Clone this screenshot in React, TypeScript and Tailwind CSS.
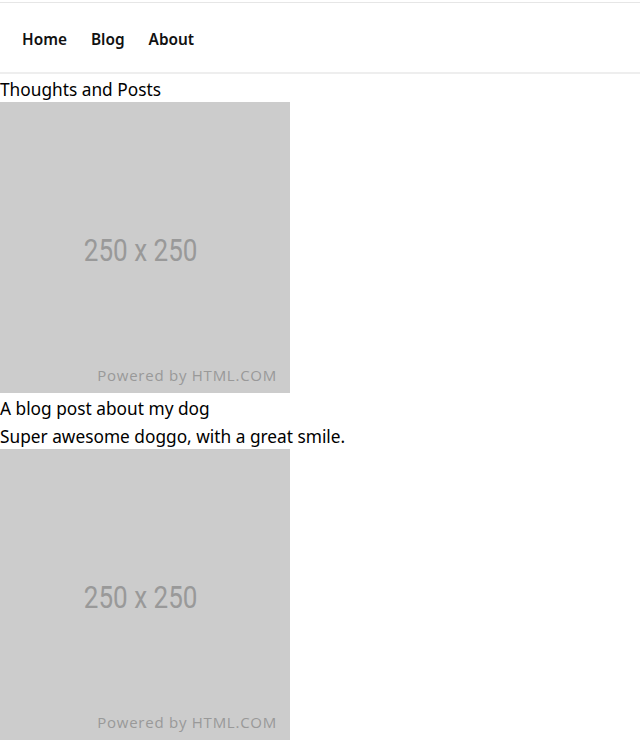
const links = ["Home", "Blog", "About"];

function Placeholder() {
  return (
    <div className="flex h-[291px] w-[290px] flex-col items-center bg-[#cccccc] text-[#999999]">
      <div className="mt-[130px] -translate-x-[4px] scale-x-[0.84] font-['Roboto',sans-serif] text-[31px] leading-[38px]">
        250 x 250
      </div>
      <div className="mt-auto mb-[8px] self-end pr-[13px] font-['Open_Sans',sans-serif] text-[15px] leading-[20px] tracking-[0.75px]">
        Powered by HTML.COM
      </div>
    </div>
  );
}

export default function App() {
  return (
    <div className="min-h-screen bg-white font-['Noto_Sans',sans-serif] text-[17.3px] text-black">
      <nav className="mt-[2px] flex h-[72px] items-center gap-[24px] border-t border-b-2 border-t-[#e6e6e6] border-b-[#eeeeee] px-[22px] pt-[4px]">
        {links.map((link) => (
          <a key={link} href="#" className="text-[15.4px] font-semibold text-[#111111]">
            {link}
          </a>
        ))}
      </nav>
      <h1 className="pt-[3px] leading-[25px]">Thoughts and Posts</h1>
      <Placeholder />
      <h2 className="pt-[3px] leading-[25px]">A blog post about my dog</h2>
      <p className="pt-[3px] leading-[25px]">Super awesome doggo, with a great smile.</p>
      <Placeholder />
    </div>
  );
}
